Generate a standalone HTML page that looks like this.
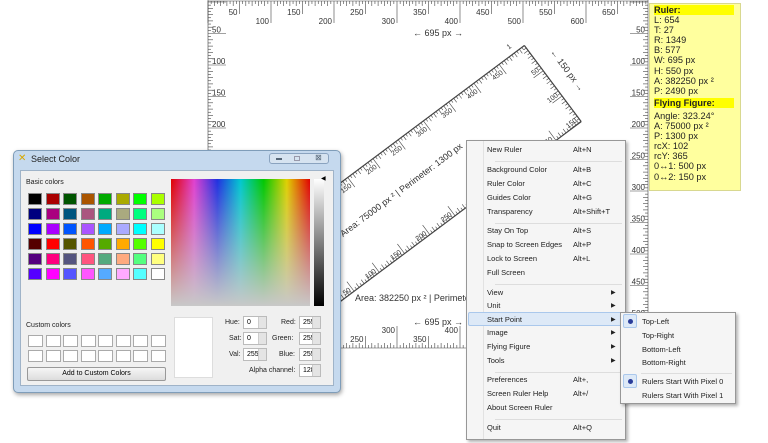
<!DOCTYPE html>
<html><head><meta charset="utf-8">
<style>
*{margin:0;padding:0;box-sizing:border-box}
body{width:768px;height:443px;overflow:hidden;background:#fff;font-family:"Liberation Sans","DejaVu Sans",sans-serif;position:relative}
svg{position:absolute;left:0;top:0}
.dlg{position:absolute;left:13px;top:150px;width:328px;height:243px;background:#c5d9ee;border:1px solid #7f9db9;border-radius:5px;box-shadow:1px 2px 4px rgba(0,0,0,.35)}
.dlg .title{position:absolute;left:17px;top:3px;font-size:9px;color:#222}
.dlg .body{position:absolute;left:6px;top:19px;width:314px;height:216px;background:#f0f0f0;border:1px solid #9fb3c8}
.sw{position:absolute;width:14px;height:12px;border:1px solid #888}
.cc{position:absolute;width:15px;height:12px;border:1px solid #aaa;background:#fff}
.lbl{position:absolute;font-size:7px;color:#222}
.spin{position:absolute;height:13px;background:#fff;border:1px solid #bbb;font-size:7px;padding:2px 0 0 3px}
.spin:after{content:"";position:absolute;right:0;top:0;width:7px;height:11px;background:#e4e4e4;border-left:1px solid #ccc}
.menu{position:absolute;left:466px;top:140px;width:160px;height:300px;background:#f5f5f5;border:1px solid #979797;box-shadow:2px 2px 3px rgba(0,0,0,.3);font-size:7.5px;color:#222}
.mi{position:absolute;left:20px}
.sc{position:absolute;left:106px}
.ar{position:absolute;left:144px;font-size:6px}
.sep{position:absolute;left:28px;right:3px;height:1px;background:#ddd}
.sub{position:absolute;left:620px;top:312px;width:116px;height:92px;background:#f5f5f5;border:1px solid #979797;box-shadow:2px 2px 3px rgba(0,0,0,.3);font-size:7.5px;color:#222}
.info{position:absolute;left:649px;top:3px;width:92px;height:188px;background:#ffff9e;border:1px solid #d8d890;font-size:9.2px;color:#222;line-height:10.1px;padding:1px 0 0 4px}
.info b{display:block;background:#ffff00;margin-right:6px;padding-left:0}
</style></head><body>
<svg id="s" width="768" height="443" font-family="Liberation Sans, sans-serif" font-size="8" fill="#333"></svg>

<div class="info">
<b>Ruler:</b>
L: 654<br>T: 27<br>R: 1349<br>B: 577<br>W: 695 px<br>H: 550 px<br>A: 382250 px ²<br>P: 2490 px
<b style="margin-top:2px">Flying Figure:</b>
<div style="margin-top:3px">Angle: 323.24°<br>A: 75000 px ²<br>P: 1300 px<br>rcX: 102<br>rcY: 365<br>0↔1: 500 px<br>0↔2: 150 px</div>
</div>

<div class="dlg">
<div style="position:absolute;left:4px;top:3px;width:10px;height:10px;color:#d8a800;font-size:10px;line-height:10px">✕</div>
<div class="title">Select Color</div>
<div style="position:absolute;left:255px;top:2px;width:60px;height:11px;border:1px solid #8aa3bf;border-radius:3px;background:#d6e3f0"></div>
<div style="position:absolute;left:262px;top:7px;width:6px;height:2px;background:#567"></div>
<div style="position:absolute;left:280px;top:5px;width:6px;height:5px;border:1px solid #99a"></div>
<div style="position:absolute;left:301px;top:2px;font-size:8px;color:#567">⊠</div>
<div class="body" id="b">
<div class="lbl" style="left:5px;top:8px">Basic colors</div>
<div class="lbl" style="left:5px;top:151px">Custom colors</div>
<div style="position:absolute;left:150px;top:8px;width:139px;height:127px;background:linear-gradient(to bottom,rgba(200,200,200,0),#c8c8c8),linear-gradient(to right,#e00000,#e040d0,#2030e0,#00c8d0,#00c800,#e0d000,#e00000)"></div>
<div style="position:absolute;left:293px;top:8px;width:10px;height:127px;background:linear-gradient(#fff,#000)"></div>
<div style="position:absolute;left:300px;top:4px;font-size:6px">◀</div>
<div style="position:absolute;left:153px;top:146px;width:39px;height:61px;background:#fff;border:1px solid #ddd"></div>
<div style="position:absolute;left:6px;top:196px;width:139px;height:14px;border:1px solid #999;border-radius:2px;background:linear-gradient(#f6f6f6,#dcdcdc);font-size:7px;text-align:center;line-height:12px">Add to Custom Colors</div>
<div class="lbl" style="left:204px;top:148px">Hue:</div><div class="spin" style="left:222px;top:145px;width:24px">0</div>
<div class="lbl" style="left:208px;top:164px">Sat:</div><div class="spin" style="left:222px;top:161px;width:24px">0</div>
<div class="lbl" style="left:208px;top:180px">Val:</div><div class="spin" style="left:222px;top:177px;width:24px">255</div>
<div class="lbl" style="left:260px;top:148px">Red:</div><div class="spin" style="left:278px;top:145px;width:22px">255</div>
<div class="lbl" style="left:251px;top:164px">Green:</div><div class="spin" style="left:278px;top:161px;width:22px">255</div>
<div class="lbl" style="left:258px;top:180px">Blue:</div><div class="spin" style="left:278px;top:177px;width:22px">255</div>
<div class="lbl" style="left:228px;top:196px">Alpha channel:</div><div class="spin" style="left:278px;top:193px;width:22px">128</div>
</div>
</div>

<div class="menu" id="m"></div>
<div class="sub" id="u"></div>

<script>
var S=document.getElementById('s'),ns='http://www.w3.org/2000/svg';
function el(t,a,txt,p){var e=document.createElementNS(ns,t);for(var k in a)e.setAttribute(k,a[k]);if(txt!=null)e.textContent=txt;(p||S).appendChild(e);return e}
function ln(x1,y1,x2,y2,p,w){el('line',{x1:x1,y1:y1,x2:x2,y2:y2,stroke:'#444','stroke-width':w||0.6},null,p)}
var k=0.63;
ln(208,0,208,348);ln(648,0,648,348);ln(208,348,648,348);ln(208,1,648,1);
for(var u=0;u<=695;u+=5){var x=208+u*k;var h=u%50==0?(u%100==0?22:13):(u%10==0?5:3);ln(x,1,x,1+h);
 if(u%50==0&&u>0&&u<=650){var y=u%100==0?24:15;el('text',{x:x-2,y:y,'text-anchor':'end','font-size':8},u)}}
for(var u=0;u<=695;u+=5){var x=208+u*k;var h=u%50==0?(u%100==0?22:12):(u%10==0?5:3);ln(x,348,x,348-h);
 if(u%50==0&&u>0&&u<=650){var y=u%100==0?333:342;el('text',{x:x-2,y:y,'text-anchor':'end','font-size':8},u)}}
for(var u=0;u<=550;u+=5){var y=2+u*k;if(y>346)break;var h=u%50==0?18:(u%10==0?5:3);ln(208,y,208+h,y);ln(648,y,648-h,y);
 if(u%50==0&&u>0){el('text',{x:212,y:y-1,'font-size':8},u);el('text',{x:645,y:y-1,'text-anchor':'end','font-size':8},u)}}
el('text',{x:438,y:36,'text-anchor':'middle','font-size':9},'← 695 px →');
el('text',{x:438,y:325,'text-anchor':'middle','font-size':9},'← 695 px →');
el('text',{x:355,y:301,'font-size':9},'Area: 382250 px ² | Perimeter: 2490 px');
var g=el('g',{transform:'translate(272,234) rotate(-36.76)'});
ln(0,0,315,0,g,1.2);ln(315,0,315,95,g,1.2);ln(0,95,315,95,g,1.2);
for(var u=0;u<=500;u+=5){var x=u*k;var h=u%50==0?12:(u%10==0?5:3);ln(x,0,x,h,g);ln(x,95,x,95-h,g);
 if(u%50==0&&u>0&&u<500){el('text',{x:x-2,y:10,'text-anchor':'end','font-size':7},u,g);el('text',{x:x-2,y:93,'text-anchor':'end','font-size':7},u,g)}}
for(var u=0;u<=150;u+=5){var y=u*k;var h=u%50==0?12:(u%10==0?5:3);ln(315,y,315-h,y,g);if(u%50==0&&u>0)el('text',{x:312,y:y-2,'text-anchor':'end','font-size':7},u,g)}
el('text',{x:55,y:45,'font-size':9},'Area: 75000 px ² | Perimeter: 1300 px',g);
el('text',{x:300,y:-6,'font-size':7},'1',g);
var g2=el('g',{transform:'translate(550,52) rotate(53.24)'});el('text',{x:0,y:0,'font-size':9},'← 150 px →',g2);

var cols=['#000000','#aa0000','#005500','#aa5500','#00aa00','#aaaa00','#00ff00','#aaff00','#00007f','#aa007f','#00557f','#aa557f','#00aa7f','#aaaa7f','#00ff7f','#aaff7f','#0000ff','#aa00ff','#0055ff','#aa55ff','#00aaff','#aaaaff','#00ffff','#aaffff','#550000','#ff0000','#555500','#ff5500','#55aa00','#ffaa00','#55ff00','#ffff00','#55007f','#ff007f','#55557f','#ff557f','#55aa7f','#ffaa7f','#55ff7f','#ffff7f','#5500ff','#ff00ff','#5555ff','#ff55ff','#55aaff','#ffaaff','#55ffff','#ffffff'];
var B=document.getElementById('b'),h='';
cols.forEach(function(c,i){h+='<div class="sw" style="left:'+(7+(i%8)*17.5)+'px;top:'+(22+Math.floor(i/8)*15)+'px;background:'+c+'"></div>'});
for(var i=0;i<16;i++)h+='<div class="cc" style="left:'+(7+(i%8)*17.5)+'px;top:'+(164+Math.floor(i/8)*15)+'px"></div>';
B.insertAdjacentHTML('beforeend',h);
var items=[['New Ruler','Alt+N',9],['-','',20],['Background Color','Alt+B',29],['Ruler Color','Alt+C',43],['Guides Color','Alt+G',57],['Transparency','Alt+Shift+T',71],['-','',82],['Stay On Top','Alt+S',90],['Snap to Screen Edges','Alt+P',104],['Lock to Screen','Alt+L',118],['Full Screen','',132],['-','',143],['View','>',152],['Unit','>',165],['Start Point','>',179],['Image','>',192],['Flying Figure','>',206],['Tools','>',220],['-','',231],['Preferences','Alt+,',239],['Screen Ruler Help','Alt+/',253],['About Screen Ruler','',267],['-','',278],['Quit','Alt+Q',287]];
var M=document.getElementById('m');h='<div style="position:absolute;left:16px;top:0;bottom:0;width:1px;background:#e2e2e2"></div>';
items.forEach(function(t){if(t[0]=='-'){h+='<div class="sep" style="top:'+t[2]+'px"></div>';return}
 var y=t[2]-5;if(t[0]=='Start Point')h+='<div style="position:absolute;left:1px;right:1px;top:'+(y-3)+'px;height:14px;background:#dde9f7;border:1px solid #aac8ec;border-radius:2px"></div>';
 h+='<div class="mi" style="top:'+y+'px">'+t[0]+'</div>';if(t[1]=='>')h+='<div class="ar" style="top:'+(y+1)+'px">▶</div>';else if(t[1])h+='<div class="sc" style="top:'+y+'px">'+t[1]+'</div>'});
M.innerHTML=h;
var U=document.getElementById('u');h='';
[['Top-Left',9,1],['Top-Right',23],['Bottom-Left',37],['Bottom-Right',50],['Rulers Start With Pixel 0',69,1],['Rulers Start With Pixel 1',83]].forEach(function(t){var y=t[1]-5;
 if(t[2])h+='<div style="position:absolute;left:2px;top:'+(y-3)+'px;width:14px;height:14px;background:#dde9f7;border:1px solid #aac8ec;border-radius:2px"></div><div style="position:absolute;left:7px;top:'+(y+2)+'px;width:5px;height:5px;border-radius:50%;background:#2a3d9a"></div>';
 h+='<div style="position:absolute;left:21px;top:'+y+'px">'+t[0]+'</div>'});
h+='<div class="sep" style="left:20px;top:60px"></div>';U.innerHTML=h;
</script>
</body></html>
